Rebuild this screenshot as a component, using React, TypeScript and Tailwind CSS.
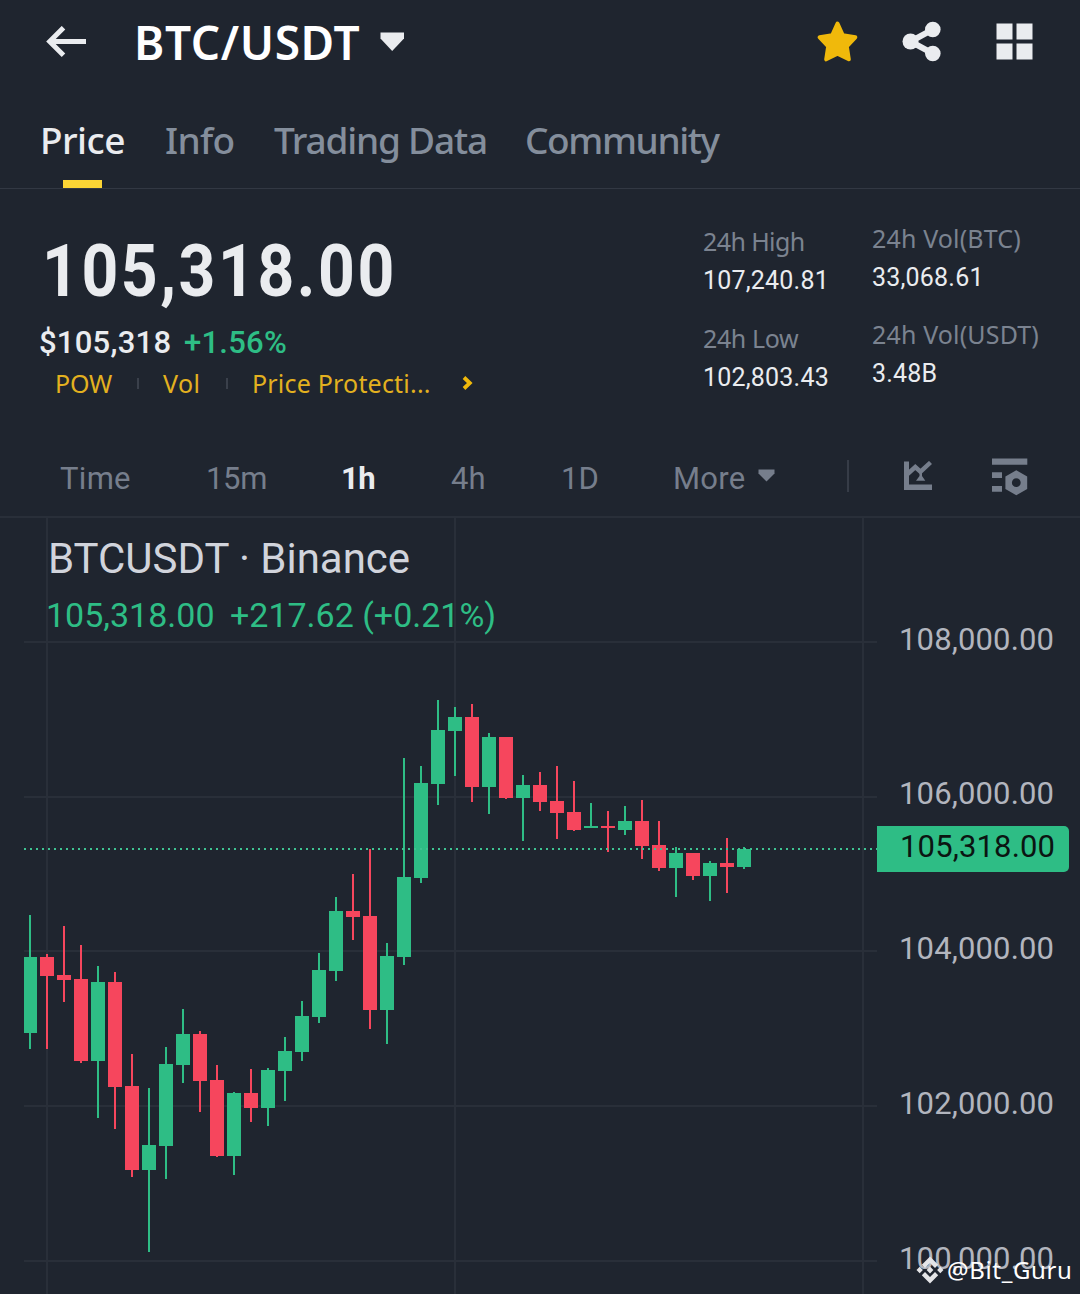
import React from 'react';

type Candle = [high: number, top: number, bottom: number, low: number, up: 0 | 1];

const CANDLE_START = 30;
const CANDLE_STEP = 17;

const candles: Candle[] = [
  [915, 957, 1033, 1049, 1],
  [954, 957, 976, 1049, 0],
  [926, 975, 980, 1002, 0],
  [945, 979, 1061, 1063, 0],
  [966, 982, 1061, 1118, 1],
  [972, 982, 1087, 1129, 0],
  [1054, 1086, 1170, 1177, 0],
  [1088, 1145, 1170, 1252, 1],
  [1047, 1064, 1146, 1179, 1],
  [1009, 1034, 1065, 1083, 1],
  [1031, 1034, 1081, 1112, 0],
  [1065, 1080, 1156, 1157, 0],
  [1092, 1093, 1156, 1175, 1],
  [1069, 1093, 1108, 1122, 0],
  [1068, 1070, 1108, 1126, 1],
  [1037, 1051, 1071, 1101, 1],
  [1001, 1016, 1052, 1061, 1],
  [953, 970, 1017, 1023, 1],
  [897, 911, 971, 981, 1],
  [874, 911, 917, 940, 0],
  [849, 916, 1010, 1029, 0],
  [943, 956, 1010, 1044, 1],
  [758, 877, 957, 965, 1],
  [766, 783, 878, 883, 1],
  [700, 730, 784, 805, 1],
  [707, 717, 731, 776, 1],
  [704, 717, 787, 802, 0],
  [733, 737, 787, 814, 1],
  [737, 737, 798, 799, 0],
  [775, 785, 798, 841, 1],
  [772, 785, 802, 811, 0],
  [766, 801, 813, 839, 0],
  [781, 812, 830, 831, 0],
  [803, 826, 828, 828, 1],
  [811, 826, 828, 852, 0],
  [806, 821, 830, 835, 1],
  [800, 821, 846, 859, 0],
  [821, 845, 868, 871, 0],
  [847, 853, 868, 897, 1],
  [853, 853, 876, 880, 0],
  [861, 863, 876, 901, 1],
  [838, 863, 867, 893, 0],
  [847, 849, 867, 869, 1],
];

const priceLevels = ['108,000.00', '106,000.00', '104,000.00', '102,000.00', '100,000.00'];

const Header: React.FC = () => (
  <header className="flex h-[84px] items-center">
    <svg className="ml-[46px] h-[32px] w-[40px]" viewBox="46 26 40 32" fill="none" aria-label="Back">
      <path d="M63.5 27.7L49.7 41.5L63.5 55.3M50 41.5H86" stroke="#eaecef" strokeWidth="5" />
    </svg>
    <h1 className="ml-[48px] w-[226px] whitespace-nowrap font-['Noto_Sans'] text-[46px] font-semibold leading-[60px] tracking-[0.6px] text-white">
      BTC/USDT
    </h1>
    <svg className="ml-[20px] h-[20px] w-[24px]" viewBox="0 0 24 20">
      <path d="M0.5 0.5H24V6.5L12.2 19L0.5 6.5Z" fill="#eaecef" />
    </svg>
    <svg className="ml-[413px] h-[42px] w-[41px]" viewBox="817 21 41 42" aria-label="Favorite">
      <path
        d="M837.5 23.5L842.8 35.3L855.3 37.3L846.8 46.4L848.8 59.3L837.5 53.8L826.2 59.3L828.2 46.4L819.7 37.3L832.2 35.3Z"
        fill="#f0b90b"
        stroke="#f0b90b"
        strokeWidth="4"
        strokeLinejoin="round"
      />
    </svg>
    <svg className="ml-[44px] h-[42px] w-[39px]" viewBox="902 21 39 42" fill="#eaecef" aria-label="Share">
      <path d="M933 29.3L910.5 41.5L933 53.7" fill="none" stroke="#eaecef" strokeWidth="6" />
      <circle cx="910.5" cy="41.5" r="8" />
      <circle cx="932.8" cy="29.5" r="7.8" />
      <circle cx="932.8" cy="53.5" r="7.8" />
    </svg>
    <svg className="ml-[55px] h-[38px] w-[37px]" viewBox="996 23.5 37 38" fill="#eaecef" aria-label="Layout">
      <path d="M996.5 24h16v16h-16zM1016.5 24h16v16h-16zM996.5 44h16v16h-16zM1016.5 44h16v16h-16z" />
    </svg>
  </header>
);

const Tabs: React.FC = () => (
  <nav className="flex h-[105px] border-b border-[#323843] pl-[41px] pt-[32px] font-['Noto_Sans'] text-[37px] font-medium leading-[48px] text-[#848e9c]">
    <div className="relative w-[124px] tracking-[-0.55px] text-[#eaecef]">
      <span className="relative -left-px">Price</span>
      <span className="absolute left-[22px] top-[64px] h-[8px] w-[39px] bg-[#fcd535]" />
    </div>
    <div className="w-[109px] tracking-[-0.7px]">Info</div>
    <div className="w-[251px] whitespace-nowrap tracking-[-1.2px]">Trading Data</div>
    <div className="whitespace-nowrap tracking-[-1.4px]">Community</div>
  </nav>
);

const Stat: React.FC<{ label: string; value: string }> = ({ label, value }) => (
  <div className="whitespace-nowrap">
    <div className="h-[38px] font-['Noto_Sans'] text-[25px] leading-[36px] text-[#7b8390]">{label}</div>
    <div className="h-[38px] font-['Roboto'] text-[25px] leading-[40px] tracking-[0.2px] text-[#eaecef]">{value}</div>
  </div>
);

const Summary: React.FC = () => (
  <section className="flex h-[251px]">
    <div className="w-[703px] pt-[46px]">
      <div className="ml-[42px] w-max origin-left scale-x-[0.88] font-['Roboto'] text-[73px] font-bold leading-[72px] tracking-[2.9px] text-[#eaecef]">
        105,318.00
      </div>
      <div className="mt-[16px] flex h-[40px] pl-[39px] font-['Roboto'] text-[31px] font-medium leading-[40px] tracking-[0.25px]">
        <span className="w-[145px] text-[#eaecef]">$105,318</span>
        <span className="text-[#2ebd85]">+1.56%</span>
      </div>
      <div className="flex h-[40px] items-center whitespace-nowrap pl-[55px] font-['Noto_Sans'] text-[25px] leading-[40px] text-[#e3b11f]">
        <span className="w-[82px] tracking-[-0.2px]">POW</span>
        <span className="h-[11px] w-[2px] bg-[#3a404b]" />
        <span className="ml-[24px] w-[63px] tracking-[0.4px]">Vol</span>
        <span className="h-[11px] w-[2px] bg-[#3a404b]" />
        <span className="ml-[24px] w-[210px] tracking-[0.2px]">Price Protecti...</span>
        <svg className="h-[16px] w-[12px]" viewBox="0 0 12 16" fill="none">
          <path d="M2 2.5L7.8 8L2 13.5" stroke="#f0b90b" strokeWidth="3.8" />
        </svg>
      </div>
    </div>
    <div className="flex w-[169px] flex-col gap-[21px] pt-[34px]">
      <div className="tracking-[-0.6px]">
        <Stat label="24h High" value="107,240.81" />
      </div>
      <div className="tracking-[-0.4px]">
        <Stat label="24h Low" value="102,803.43" />
      </div>
    </div>
    <div className="flex flex-col gap-[20px] pt-[31px] tracking-[0.15px]">
      <Stat label="24h Vol(BTC)" value="33,068.61" />
      <Stat label="24h Vol(USDT)" value="3.48B" />
    </div>
  </section>
);

const IntervalBar: React.FC = () => (
  <div className="flex h-[76px] items-center pl-[60px] font-['Roboto'] text-[31px] leading-[40px] text-[#767e8c]">
    <span className="mt-[2px] w-[146px] tracking-[0.3px]">Time</span>
    <span className="mt-[2px] w-[135px] tracking-[-0.3px]">15m</span>
    <span className="mt-[2px] w-[110px] font-bold tracking-[-0.5px] text-[#eaecef]">1h</span>
    <span className="mt-[2px] w-[110px]">4h</span>
    <span className="mt-[2px] w-[112px]">1D</span>
    <span className="mt-[2px] w-[85px] tracking-[0.3px]">More</span>
    <svg className="mb-[6px] h-[13px] w-[17px]" viewBox="0 0 17 13">
      <path d="M0.5 0.5H16.5V4.5L8.5 12.5L0.5 4.5Z" fill="#767e8c" />
    </svg>
    <span className="ml-[72px] mb-[4px] h-[32px] w-[2px] bg-[#363c47]" />
    <svg className="ml-[54px] mb-[5px] h-[30px] w-[30px]" viewBox="903 461 30 30" fill="#767e8c">
      <path d="M904 461.5H909V484.5H932V490H904Z" />
      <path d="M907 474.5L915.3 467L920.5 471.7L930.5 462.5" fill="none" stroke="#767e8c" strokeWidth="4.4" />
      <path d="M919.5 472H922V476L925.3 480.8H916L919.5 476Z" />
    </svg>
    <svg className="ml-[58px] mb-[2px] h-[38px] w-[38px]" viewBox="991 458 38 38" fill="#767e8c">
      <path d="M992 458.5H1027.3V464.7H992ZM992 472.3H1002V478H992ZM992 486H1002V491.7H992Z" />
      <path
        fillRule="evenodd"
        d="M1016.3 470.3L1027.2 476.5V489L1016.3 495.2L1005.4 489V476.5ZM1016.3 478.3a4.4 4.4 0 1 0 0 8.8a4.4 4.4 0 1 0 0 -8.8Z"
      />
    </svg>
  </div>
);

const CandleChart: React.FC = () => (
  <svg className="h-[778px] w-[877px] shrink-0" viewBox="0 516 877 778" shapeRendering="crispEdges">
    {[47, 455, 863].map((x) => (
      <rect key={x} x={x - 1} y="516" width="2" height="778" fill="#292f39" />
    ))}
    {[642, 797, 951, 1106, 1261].map((y) => (
      <rect key={y} x="24" y={y - 1} width="853" height="2" fill="#292f39" />
    ))}
    {candles.map(([high, top, bottom, low, up], i) => {
      const x = CANDLE_START + i * CANDLE_STEP;
      const left = Math.max(x - 7, 24);
      return (
        <g key={x} fill={up ? '#2ebd85' : '#f6465d'}>
          <rect x={x - 1} y={high} width="2" height={low - high} />
          <rect x={left} y={top} width={x + 7 - left} height={bottom - top} />
        </g>
      );
    })}
    <path d="M24 849H877" stroke="#3fc492" strokeWidth="2" strokeDasharray="2 4" />
  </svg>
);

const BinanceMark: React.FC = () => (
  <svg className="h-[28px] w-[28px]" viewBox="0 0 28 28" fill="#e4e5e7">
    <path d="M14 0.5L22.2 8.7L19 11.9L14 6.9L9 11.9L5.8 8.7Z" />
    <path d="M14 27.5L22.2 19.3L19 16.1L14 21.1L9 16.1L5.8 19.3Z" />
    <path d="M14 10.6L17.4 14L14 17.4L10.6 14ZM3.7 10.8L6.9 14L3.7 17.2L0.5 14ZM24.3 10.8L27.5 14L24.3 17.2L21.1 14Z" />
  </svg>
);

const Chart: React.FC = () => (
  <section className="relative flex h-[778px] font-['Roboto']">
    <CandleChart />
    <div className="flex flex-1 flex-col pl-[22px] pt-[103.5px] text-[31px] leading-[40px] tracking-[0.15px] text-[#b2b5be]">
      {priceLevels.map((level) => (
        <div key={level} className="h-[154.75px] shrink-0">
          {level}
        </div>
      ))}
    </div>
    <div className="absolute left-0 top-0 h-[2px] w-full bg-[#292f39]" />
    <div className="absolute left-[48px] top-[18px] whitespace-nowrap text-[42px] leading-[50px] tracking-[-0.03px] text-[#d1d4dc]">
      BTCUSDT · Binance
    </div>
    <div className="absolute left-[46px] top-[79px] flex whitespace-nowrap text-[34px] leading-[40px] text-[#2ebd85]">
      <span className="w-[184px]">105,318.00</span>
      <span>+217.62 (+0.21%)</span>
    </div>
    <div className="absolute left-[877px] top-[310px] h-[46px] w-[192px] rounded-r-[5px] bg-[#2ebd85] pl-[23px] text-[31px] leading-[41px] tracking-[0.15px] text-[#0b1512]">
      105,318.00
    </div>
    <div className="absolute left-[916px] top-[740px] flex h-[28px] items-center gap-[3px] font-['Noto_Sans'] text-[24px] leading-[28px] tracking-[0.65px] text-white">
      <BinanceMark />
      <span>@Bit_Guru</span>
    </div>
  </section>
);

export default function App() {
  return (
    <main className="h-[1294px] w-[1080px] overflow-hidden bg-[#1f252f]">
      <Header />
      <Tabs />
      <Summary />
      <IntervalBar />
      <Chart />
    </main>
  );
}
